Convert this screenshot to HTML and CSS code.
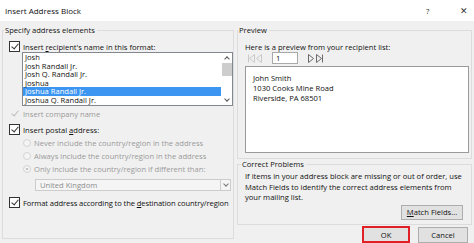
FILE: index.html
```html
<!DOCTYPE html>
<html lang="en">
<head>
  <meta charset="UTF-8" />
  <meta name="viewport" content="width=device-width, initial-scale=1.0"/>
  <title>Insert Address Block</title>
  <link rel="stylesheet" href="styles.css">
</head>
<body>
  <div class="dialog">
    <div class="titlebar">
      <span class="title">Insert Address Block</span>
      <span class="help">?</span>
      <span class="close">&#x2715;</span>
    </div>

    <div class="content">
      <fieldset class="group elements">
        <legend>Specify address elements</legend>

        <div class="check">
          <span class="box checked"></span>
          <span>Insert <u>r</u>ecipient's name in this format:</span>
        </div>

        <div class="listbox">
          <ul class="names">
            <li>Josh</li>
            <li>Josh Randall Jr.</li>
            <li>Josh Q. Randall Jr.</li>
            <li>Joshua</li>
            <li class="selected">Joshua Randall Jr.</li>
            <li>Joshua Q. Randall Jr.</li>
          </ul>
          <div class="scrollbar">
            <span class="arrow up"></span>
            <span class="thumb"></span>
            <span class="arrow down"></span>
          </div>
        </div>

        <div class="check disabled company">
          <span class="box checked"></span>
          <span>Insert company name</span>
        </div>

        <div class="check postal">
          <span class="box checked"></span>
          <span>Insert postal <u>a</u>ddress:</span>
        </div>

        <div class="radios">
          <div class="radio"><span class="dot"></span>Never include the country/region in the address</div>
          <div class="radio"><span class="dot"></span>Always include the country/region in the address</div>
          <div class="radio"><span class="dot on"></span>Only include the country/region if different than:</div>
        </div>

        <div class="select">
          <span>United Kingdom</span>
          <span class="drop"></span>
        </div>

        <div class="check format">
          <span class="box checked"></span>
          <span>Format address according to the <u>d</u>estination country/region</span>
        </div>
      </fieldset>

      <div class="side">
        <fieldset class="group preview">
          <legend>Preview</legend>
          <p class="hint">Here is a preview from your recipient list:</p>
          <div class="nav">
            <svg class="navicon" width="16" height="9" viewBox="0 0 16 9">
              <path d="M1.5 0.5v8M7.5 0.5L2.5 4.5l5 4z M14.5 0.5L9.5 4.5l5 4z" fill="none" stroke="#c9c9c9" stroke-width="1"/>
            </svg>
            <span class="record">1</span>
            <svg class="navicon" width="17" height="9" viewBox="0 0 17 9">
              <path d="M1.5 0.5l5 4-5 4z M9.5 0.5l5 4-5 4z M15.5 0.5v8" fill="none" stroke="#6a6a6a" stroke-width="1"/>
            </svg>
          </div>
          <div class="address">
            <div>John Smith</div>
            <div>1030 Cooks Mine Road</div>
            <div>Riverside, PA 68501</div>
          </div>
        </fieldset>

        <fieldset class="group problems">
          <legend>Correct Problems</legend>
          <p class="note">If items in your address block are missing or out of order, use Match Fields to identify the correct address elements from your mailing list.</p>
          <div class="row-end">
            <button class="btn match"><u>M</u>atch Fields...</button>
          </div>
        </fieldset>

        <div class="actions">
          <button class="btn ok">OK</button>
          <button class="btn cancel">Cancel</button>
        </div>
      </div>
    </div>
  </div>
</body>
</html>
```

FILE: styles.css
```css
body {
  margin: 0;
  font-family: "Open Sans", "Noto Sans", sans-serif;
  font-size: 7.6px;
  color: #111;
  background: #f0f0f0;
}

.dialog {
  width: 474px;
  height: 243px;
  overflow: hidden;
  background: #f0f0f0;
}

.titlebar {
  height: 21px;
  background: #fff;
  display: flex;
  align-items: center;
  padding: 0 0 0 5px;
  font-size: 8px;
}

.title {
  flex: 1;
}

.help {
  width: 34px;
  color: #333;
}

.close {
  width: 14px;
  font-size: 9px;
  color: #333;
}

.content {
  display: flex;
  padding: 4px 0 0 2px;
  gap: 3px;
}

.group {
  margin: 0;
  border: 1px solid #dcdcdc;
  min-width: 0;
}

.group legend {
  padding: 0 2px 0 1px;
  line-height: 10px;
  color: #111;
}

u {
  text-decoration-thickness: 0.5px;
  text-underline-offset: 1px;
}

/* left group */

.elements {
  width: 232px;
  height: 214px;
  box-sizing: border-box;
  padding: 6px 0 0 6px;
}

.elements legend {
  margin-left: -5px;
}

.check {
  display: flex;
  align-items: center;
  gap: 3px;
  height: 11px;
  white-space: nowrap;
}

.box {
  flex: none;
  width: 11px;
  height: 11px;
  box-sizing: border-box;
  border: 1px solid #333;
  background: #fff;
  position: relative;
}

.box.checked::after {
  content: "";
  position: absolute;
  left: 3px;
  top: 0px;
  width: 3px;
  height: 6px;
  border: solid #333;
  border-width: 0 1px 1px 0;
  transform: rotate(40deg);
}

.check.disabled {
  color: #9a9a9a;
}

.check.disabled .box {
  border-color: transparent;
  background: transparent;
}

.check.disabled .box::after {
  border-color: #bdbdbd;
}

.listbox {
  margin: 0 0 0 13px;
  width: 211px;
  height: 54px;
  box-sizing: border-box;
  border: 1px solid #828790;
  background: #fff;
  display: flex;
}

.names {
  list-style: none;
  margin: 0;
  padding: 0;
  flex: 1;
  line-height: 8.6px;
}

.names li {
  padding-left: 2px;
}

.names li.selected {
  background: #3c95f0;
  color: #fff;
}

.scrollbar {
  width: 11px;
  display: flex;
  flex-direction: column;
  align-items: center;
  background: #fff;
}

.arrow {
  width: 11px;
  height: 10px;
  position: relative;
}

.arrow::after {
  content: "";
  position: absolute;
  left: 4px;
  width: 3px;
  height: 3px;
  border: solid #555;
  border-width: 1px 0 0 1px;
}

.arrow.up::after {
  top: 4px;
  transform: rotate(45deg);
}

.arrow.down {
  margin-top: auto;
}

.arrow.down::after {
  top: 2px;
  transform: rotate(225deg);
}

.thumb {
  width: 10px;
  height: 13px;
  background: #cdcdcd;
}

.company {
  margin-top: 2px;
}

.postal {
  margin-top: 5px;
}

.radios {
  margin: 3px 0 0 14px;
  display: flex;
  flex-direction: column;
  gap: 4px;
  color: #9a9a9a;
}

.radio {
  display: flex;
  align-items: center;
  gap: 3px;
  height: 9px;
}

.dot {
  width: 8px;
  height: 8px;
  box-sizing: border-box;
  border: 1px solid #d4d4d4;
  border-radius: 50%;
  background: #f4f4f4;
  position: relative;
}

.dot.on::after {
  content: "";
  position: absolute;
  left: 2px;
  top: 2px;
  width: 2px;
  height: 2px;
  border-radius: 50%;
  background: #b0b0b0;
}

.select {
  margin: 6px 0 0 26px;
  width: 196px;
  height: 12px;
  box-sizing: border-box;
  border: 1px solid #cccccc;
  background: #f5f5f5;
  color: #8c8c8c;
  display: flex;
  align-items: center;
  padding-left: 4px;
}

.select span:first-child {
  flex: 1;
}

.drop {
  width: 10px;
  height: 10px;
  box-sizing: border-box;
  border-left: 1px solid #cccccc;
  position: relative;
}

.drop::after {
  content: "";
  position: absolute;
  left: 3px;
  top: 2px;
  width: 3px;
  height: 3px;
  border: solid #777;
  border-width: 0 1px 1px 0;
  transform: rotate(45deg);
}

.format {
  margin-top: 6px;
  letter-spacing: -0.1px;
}

/* right column */

.side {
  width: 235px;
  display: flex;
  flex-direction: column;
}

.preview {
  height: 134px;
  box-sizing: border-box;
  padding: 7px 2px 0 7px;
}

.preview legend {
  margin-left: -7px;
}

.hint {
  margin: 0;
  line-height: 10px;
}

.nav {
  height: 12px;
  display: flex;
  align-items: center;
  gap: 9px;
  padding-left: 2px;
}

.record {
  width: 26px;
  height: 12px;
  box-sizing: border-box;
  border: 1px solid #a9a9a9;
  background: #fff;
  padding-left: 3px;
  line-height: 10px;
}

.navicon {
  display: block;
}

.address {
  margin-top: 2px;
  height: 87px;
  box-sizing: border-box;
  border: 1px solid #9a9a9a;
  background: #fff;
  padding: 6px 0 0 7px;
  line-height: 10px;
}

.problems {
  margin-top: 0;
  height: 66px;
  box-sizing: border-box;
  padding: 2px 8px 0 7px;
}

.problems legend {
  margin-left: -4px;
}

.note {
  margin: 0;
  line-height: 10.5px;
}

.row-end {
  display: flex;
  justify-content: flex-end;
  margin-top: 2px;
}

.btn {
  font: inherit;
  color: #111;
  background: #e1e1e1;
  border: 1px solid #adadad;
  padding: 0;
  height: 15px;
}

.match {
  width: 62px;
}

.actions {
  display: flex;
  justify-content: flex-end;
  gap: 8px;
  margin-top: 1px;
  padding-right: 4px;
}

.ok {
  width: 48px;
  height: 17px;
  border: 2px solid #e01f26;
}

.cancel {
  width: 50px;
  height: 16px;
  margin-top: 1px;
}
```
